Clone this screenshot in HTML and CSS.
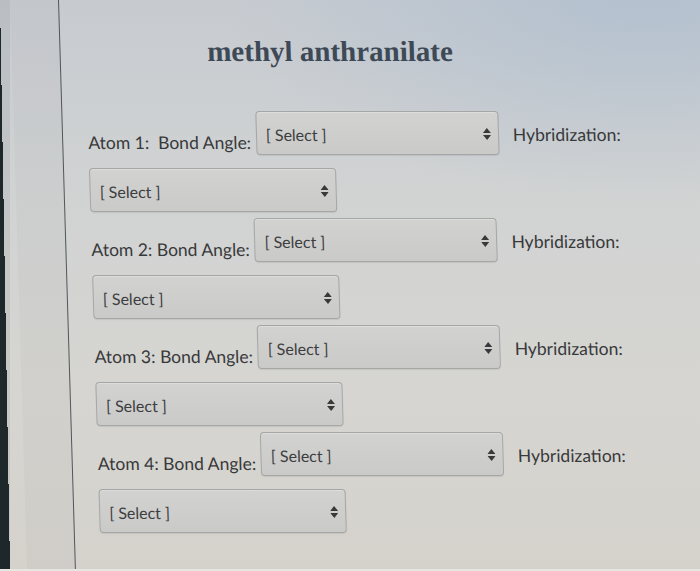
FILE: index.html
```html
<!DOCTYPE html>
<html lang="en">
<head>
<meta charset="utf-8">
<title>methyl anthranilate</title>
<link rel="stylesheet" href="styles.css">
</head>
<body>
<div class="screen">
  <div class="bezel"></div>
  <div class="surface">
    <div class="gutter"></div>
    <main class="quiz">
      <h1 class="title">methyl anthranilate</h1>

      <section class="atom">
        <div class="bond-row">
          <span class="label">Atom 1:&nbsp; Bond Angle:</span>
          <div class="dropdown dropdown--bond"><span class="dropdown__text">[ Select ]</span><svg class="dropdown__arrows" viewBox="0 0 8 12" width="8" height="12"><path d="M4 0L8 5H0Z"/><path d="M0 7H8L4 12Z"/></svg></div>
          <span class="hyb">Hybridization:</span>
        </div>
        <div class="dropdown dropdown--hyb"><span class="dropdown__text">[ Select ]</span><svg class="dropdown__arrows" viewBox="0 0 8 12" width="8" height="12"><path d="M4 0L8 5H0Z"/><path d="M0 7H8L4 12Z"/></svg></div>
      </section>

      <section class="atom">
        <div class="bond-row">
          <span class="label">Atom 2: Bond Angle:</span>
          <div class="dropdown dropdown--bond"><span class="dropdown__text">[ Select ]</span><svg class="dropdown__arrows" viewBox="0 0 8 12" width="8" height="12"><path d="M4 0L8 5H0Z"/><path d="M0 7H8L4 12Z"/></svg></div>
          <span class="hyb">Hybridization:</span>
        </div>
        <div class="dropdown dropdown--hyb"><span class="dropdown__text">[ Select ]</span><svg class="dropdown__arrows" viewBox="0 0 8 12" width="8" height="12"><path d="M4 0L8 5H0Z"/><path d="M0 7H8L4 12Z"/></svg></div>
      </section>

      <section class="atom">
        <div class="bond-row">
          <span class="label">Atom 3: Bond Angle:</span>
          <div class="dropdown dropdown--bond"><span class="dropdown__text">[ Select ]</span><svg class="dropdown__arrows" viewBox="0 0 8 12" width="8" height="12"><path d="M4 0L8 5H0Z"/><path d="M0 7H8L4 12Z"/></svg></div>
          <span class="hyb">Hybridization:</span>
        </div>
        <div class="dropdown dropdown--hyb"><span class="dropdown__text">[ Select ]</span><svg class="dropdown__arrows" viewBox="0 0 8 12" width="8" height="12"><path d="M4 0L8 5H0Z"/><path d="M0 7H8L4 12Z"/></svg></div>
      </section>

      <section class="atom">
        <div class="bond-row">
          <span class="label">Atom 4: Bond Angle:</span>
          <div class="dropdown dropdown--bond"><span class="dropdown__text">[ Select ]</span><svg class="dropdown__arrows" viewBox="0 0 8 12" width="8" height="12"><path d="M4 0L8 5H0Z"/><path d="M0 7H8L4 12Z"/></svg></div>
          <span class="hyb">Hybridization:</span>
        </div>
        <div class="dropdown dropdown--hyb"><span class="dropdown__text">[ Select ]</span><svg class="dropdown__arrows" viewBox="0 0 8 12" width="8" height="12"><path d="M4 0L8 5H0Z"/><path d="M0 7H8L4 12Z"/></svg></div>
      </section>
    </main>
  </div>
</div>
</body>
</html>
```

FILE: styles.css
```css
html, body {
  margin: 0;
  height: 100%;
}

body {
  background: #e7e6e2;
  overflow: hidden;
  font-family: Lato, "Open Sans", sans-serif;
  color: #38393a;
}

/* monitor surface */
.screen {
  display: flex;
  width: 700px;
  height: 569px;
  background:
    radial-gradient(ellipse 60% 35% at 92% 0%, rgba(160, 182, 206, 0.5), rgba(160, 182, 206, 0) 100%),
    linear-gradient(180deg, #c7cbd0 0%, #d1d3d3 35%, #d6d5d1 70%, #d5d2cc 100%);
  border-bottom: 2px solid #e7e6e2;
}

/* dark frame edge, widening towards the bottom */
.bezel {
  flex: none;
  width: 10px;
  background: linear-gradient(to top right, #1e282b 50%, rgba(30, 40, 43, 0.08) 50%);
}

/* page content, leaning slightly to the right */
.surface {
  display: flex;
  transform: skewX(1.7deg);
  transform-origin: 0 0;
}

.gutter {
  flex: none;
  width: 48px;
  border-right: 1px solid #50575c;
  background: rgba(0, 0, 0, 0.02);
}

.quiz {
  flex: none;
  width: 489px;
  padding-left: 25px;
}

.title {
  margin: 34px 0 43px;
  text-align: center;
  font-family: "Liberation Serif", "Times New Roman", serif;
  font-weight: bold;
  font-size: 29px;
  line-height: 34px;
  color: #3e4957;
}

.atom {
  margin-bottom: 6px;
}

.bond-row {
  display: flex;
  align-items: flex-start;
  height: 44px;
  margin-bottom: 13px;
  white-space: nowrap;
}

.label {
  margin-top: 22px;
  margin-right: 5px;
  font-size: 17.5px;
  line-height: 20px;
}

.hyb {
  margin-top: 14px;
  margin-left: 14px;
  font-size: 17.5px;
  line-height: 20px;
}

.dropdown {
  flex: none;
  box-sizing: border-box;
  display: flex;
  align-items: center;
  justify-content: space-between;
  height: 44px;
  padding: 2px 7px 0 9px;
  border: 1px solid #a5a6a6;
  border-radius: 4px;
  background: linear-gradient(180deg, #d2d2d1 0%, #cacac9 100%);
  box-shadow: 0 1px 1px rgba(0, 0, 0, 0.08), inset 0 1px 0 rgba(255, 255, 255, 0.25);
}

.dropdown--bond {
  width: 243px;
}

.dropdown--hyb {
  width: 247px;
}

.dropdown__text {
  font-size: 16px;
  color: #3d3e3f;
}

.dropdown__arrows {
  fill: #38393a;
}
```
